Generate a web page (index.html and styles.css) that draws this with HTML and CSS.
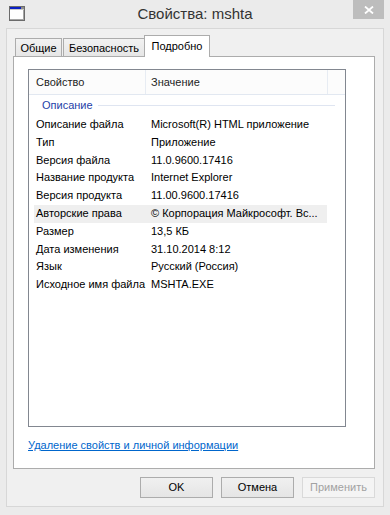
FILE: index.html
```html
<!DOCTYPE html>
<html lang="ru">
<head>
<meta charset="utf-8">
<title>Свойства: mshta</title>
<link rel="stylesheet" href="styles.css">
</head>
<body>
<div class="window">
  <div class="titlebar">
    <div class="tb-left">
      <svg class="appicon" width="16" height="15" viewBox="0 0 16 15">
        <rect x="0.5" y="0.5" width="15" height="14" fill="#ffffff" stroke="#6b6b6b"/>
        <rect x="1" y="1" width="11" height="2" fill="#0a1fc4"/>
        <rect x="12" y="1" width="3" height="2" fill="#8c8c8c"/>
        <rect x="1" y="3" width="14" height="1" fill="#c9c9c9"/>
        <rect x="14" y="4" width="1" height="10" fill="#a5a5a5"/>
        <rect x="1" y="13" width="14" height="1" fill="#a5a5a5"/>
      </svg>
    </div>
    <div class="title">Свойства: mshta</div>
    <div class="tb-right">
      <div class="close">
        <svg width="10" height="8" viewBox="0 0 10 8">
          <path d="M1 0.5 L9 7.5 M9 0.5 L1 7.5" stroke="#ffffff" stroke-width="1.8" fill="none"/>
        </svg>
      </div>
    </div>
  </div>

  <div class="client">
    <div class="tabs">
      <div class="tab t1">Общие</div>
      <div class="tab t2">Безопасность</div>
      <div class="tab t3 active">Подробно</div>
    </div>
    <div class="panel">
      <div class="list">
        <div class="lhead">
          <div class="hc c1">Свойство</div>
          <div class="hc c2">Значение</div>
          <div class="hc c3"></div>
        </div>
        <div class="group"><span class="gname">Описание</span><span class="gline"></span></div>
        <div class="row"><div class="k">Описание файла</div><div class="v">Microsoft(R) HTML приложение</div></div>
        <div class="row"><div class="k">Тип</div><div class="v">Приложение</div></div>
        <div class="row"><div class="k">Версия файла</div><div class="v">11.0.9600.17416</div></div>
        <div class="row"><div class="k">Название продукта</div><div class="v">Internet Explorer</div></div>
        <div class="row"><div class="k">Версия продукта</div><div class="v">11.00.9600.17416</div></div>
        <div class="row sel"><div class="k">Авторские права</div><div class="v">© Корпорация Майкрософт. Вс...</div></div>
        <div class="row"><div class="k">Размер</div><div class="v">13,5 КБ</div></div>
        <div class="row"><div class="k">Дата изменения</div><div class="v">31.10.2014 8:12</div></div>
        <div class="row"><div class="k">Язык</div><div class="v">Русский (Россия)</div></div>
        <div class="row"><div class="k">Исходное имя файла</div><div class="v">MSHTA.EXE</div></div>
      </div>
      <a class="link" href="#">Удаление свойств и личной информации</a>
    </div>
    <div class="buttons">
      <div class="btn">OK</div>
      <div class="btn">Отмена</div>
      <div class="btn disabled">Применить</div>
    </div>
  </div>
</div>
</body>
</html>
```
FILE: styles.css
```css
html, body {
  margin: 0;
  padding: 0;
  background: #ebebeb;
}
.window {
  width: 390px;
  height: 515px;
  background: #ebebeb;
  font-family: "Liberation Sans", Arial, sans-serif;
  font-size: 11px;
  color: #000;
  display: flex;
  flex-direction: column;
  box-sizing: border-box;
}
.titlebar {
  height: 28px;
  display: grid;
  grid-template-columns: 1fr auto 1fr;
  align-items: start;
}
.appicon {
  display: block;
  margin: 6px 0 0 9px;
}
.title {
  font-size: 15px;
  line-height: 27px;
  color: #333333;
}
.tb-right {
  display: flex;
  justify-content: flex-end;
}
.close {
  width: 31px;
  height: 19px;
  margin-right: 6px;
  background: #bdbdbd;
  display: flex;
  align-items: center;
  justify-content: center;
}
.close svg { display: block; }
.client {
  margin: 0 6px;
  height: 479px;
  box-sizing: border-box;
  border: 1px solid #d7d7d7;
  background: #f0f0f0;
  padding: 6px 8px 0 6px;
}
.tabs {
  height: 22px;
  margin-bottom: -1px;
  padding-left: 2px;
  display: flex;
  align-items: flex-end;
  position: relative;
  z-index: 2;
}
.tab {
  height: 18px;
  box-sizing: border-box;
  border: 1px solid #acacac;
  border-bottom: none;
  background: linear-gradient(#f2f2f2, #e6e6e6);
  margin-bottom: 1px;
  padding-top: 1px;
  line-height: 16px;
  text-align: center;
  white-space: nowrap;
}
.t1 { width: 47px; margin-right: 1px; }
.t2 { width: 82px; }
.t3 { width: 66px; margin-left: -1px; }
.tab.active {
  height: 22px;
  margin-bottom: 0;
  padding-top: 2px;
  background: #ffffff;
}
.panel {
  height: 413px;
  box-sizing: border-box;
  border: 1px solid #acacac;
  background: #ffffff;
  padding: 12px 0 0 14px;
}
.list {
  width: 318px;
  height: 358px;
  box-sizing: border-box;
  border: 1px solid #828790;
  background: #ffffff;
}
.lhead {
  height: 25px;
  box-sizing: border-box;
  border-bottom: 1px solid #e2e8f1;
  background: #fcfcfc;
  display: flex;
  color: #1e1e1e;
}
.hc {
  height: 24px;
  line-height: 24px;
  box-sizing: border-box;
  white-space: nowrap;
}
.c1 { width: 117px; padding-left: 7px; border-right: 1px solid #e7ecf3; }
.c2 { width: 182px; padding-left: 5px; border-right: 1px solid #e7ecf3; }
.c3 { flex: 1; }
.group {
  height: 21px;
  display: flex;
  align-items: center;
  padding-left: 13px;
  padding-right: 10px;
}
.gname {
  color: #1f3fa8;
  line-height: 19px;
}
.gline {
  flex: 1;
  height: 1px;
  margin-left: 5px;
  background: #dfe5f1;
}
.row {
  margin-left: 5px;
  width: 293px;
  height: 17.8px;
  line-height: 17.8px;
  display: flex;
  white-space: nowrap;
}
.row.sel { background: #efefef; }
.k {
  width: 111px;
  padding-left: 2px;
  box-sizing: border-box;
}
.v {
  flex: 1;
  padding-left: 6px;
  overflow: hidden;
}
.link {
  display: inline-block;
  margin-top: 10px;
  line-height: 16px;
  color: #0066cc;
  text-decoration: underline;
}
.buttons {
  margin-top: 8px;
  display: flex;
  justify-content: flex-end;
}
.btn {
  width: 73px;
  height: 21px;
  box-sizing: border-box;
  margin-left: 8px;
  border: 1px solid #acacac;
  background: linear-gradient(#f0f0f0, #e5e5e5);
  text-align: center;
  line-height: 19px;
}
.btn.disabled {
  border-color: #d9d9d9;
  background: #f4f4f4;
  color: #a2a2a2;
}
```
